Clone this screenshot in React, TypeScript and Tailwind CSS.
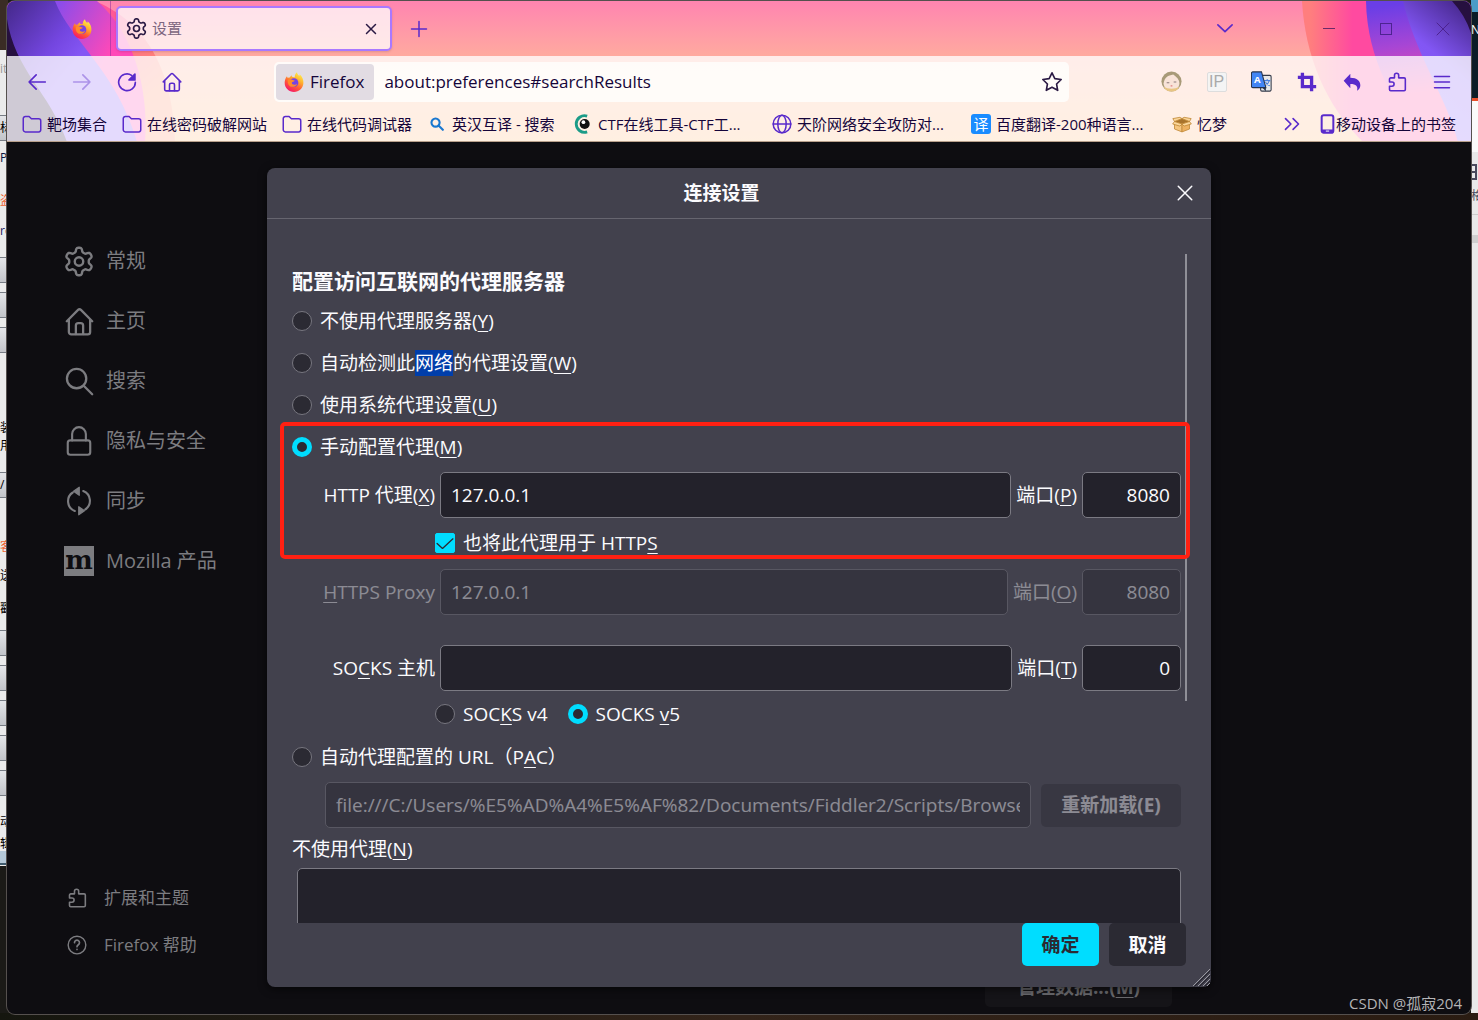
import { useState } from "react";
import type { ReactNode } from "react";
import { ChevronsRight } from "lucide-react";

const FONT = "font-['Open_Sans','Noto_Sans_CJK_SC',sans-serif]";

// Six-lobed outline of the settings gear, on a 24x24 box.
function gearPath() {
  const pts: string[] = [];
  for (let i = 0; i < 120; i++) {
    const t = (i / 120) * Math.PI * 2;
    const wave = Math.tanh(2 * Math.cos(6 * t)) / Math.tanh(2);
    const r = 9.4 + 1.6 * wave;
    pts.push(`${(12 + r * Math.sin(t)).toFixed(2)} ${(12 - r * Math.cos(t)).toFixed(2)}`);
  }
  return `M${pts.join("L")}Z`;
}
const GEAR = gearPath();

type IconProps = { className?: string };

function Line({ className, children, width = 1.5 }: IconProps & { children: ReactNode; width?: number }) {
  return (
    <svg
      viewBox="0 0 24 24"
      className={className}
      fill="none"
      stroke="currentColor"
      strokeWidth={width}
      strokeLinecap="round"
      strokeLinejoin="round"
      aria-hidden="true"
    >
      {children}
    </svg>
  );
}

const GearIcon = ({ className }: IconProps) => (
  <Line className={className} width={1.9}>
    <path d={GEAR} />
    <circle cx="12" cy="12" r="3.4" />
  </Line>
);

const HomeIcon = ({ className }: IconProps) => (
  <Line className={className} width={1.9}>
    <path d="M1.5 11.8 10.8 2.4a1.7 1.7 0 0 1 2.4 0l9.3 9.4M3.2 10.4v10.2a2 2 0 0 0 2 2h13.6a2 2 0 0 0 2-2V10.4" />
    <path d="M9 22.4v-7a2 2 0 0 1 2-2h2a2 2 0 0 1 2 2v7" />
  </Line>
);

const SearchIcon = ({ className }: IconProps) => (
  <Line className={className} width={1.9}>
    <circle cx="9.6" cy="9.6" r="8" />
    <path d="m15.5 15.5 7 7" />
  </Line>
);

const LockIcon = ({ className }: IconProps) => (
  <Line className={className} width={1.7}>
    <rect x="3" y="11.5" width="18" height="11.5" rx="2" />
    <path d="M6.5 11.5V6.4a5.5 5.5 0 0 1 11 0v5.1" />
  </Line>
);

const SyncIcon = ({ className }: IconProps) => (
  <Line className={className} width={1.7}>
    <path d="M7 5.2A8.4 8.4 0 0 0 8.6 20M17 18.8A8.4 8.4 0 0 0 15.4 4" />
    <path d="M12.2 1v6.4L7.6 4.2ZM11.8 16.6V23l4.6-3.2Z" fill="currentColor" strokeWidth="1" />
  </Line>
);

const PuzzleIcon = ({ className }: IconProps) => (
  <Line className={className} width={1.9}>
    <path d="M3 12V8.5A1.5 1.5 0 0 1 4.5 7H9V4a2.5 2.5 0 0 1 5 0V7h6.500A1.5 1.5 0 0 1 22 8.5v12.5a1.5 1.5 0 0 1-1.5 1.5h-16A1.5 1.5 0 0 1 3 21V17h3a2.5 2.5 0 0 0 0-5Z" />
  </Line>
);

const HelpIcon = ({ className }: IconProps) => (
  <Line className={className} width={1.7}>
    <circle cx="12" cy="12" r="10.6" />
    <path d="M9 9.2a3 3 0 1 1 4.6 2.5c-1 .7-1.6 1.2-1.6 2.5M12 17.3v.2" strokeWidth="2" />
  </Line>
);

const CloseIcon = ({ className }: IconProps) => (
  <Line className={className}>
    <path d="m3 3 18 18M21 3 3 21" />
  </Line>
);

const FolderIcon = ({ className }: IconProps) => (
  <Line className={className} width={1.8}>
    <path d="M1.5 19V5.500a2.5 2.5 0 0 1 2.5-2.5h4.5l2.800 2.8H20a2.5 2.5 0 0 1 2.5 2.5V19a2.5 2.5 0 0 1-2.5 2.5H4A2.5 2.5 0 0 1 1.5 19Z" />
  </Line>
);

const GlobeIcon = ({ className }: IconProps) => (
  <Line className={className} width={1.8}>
    <circle cx="12" cy="12" r="10.6" />
    <ellipse cx="12" cy="12" rx="5" ry="10.6" />
    <path d="M1.4 12h21.2" />
  </Line>
);

function FirefoxIcon({ className }: IconProps) {
  return (
    <svg viewBox="0 0 24 24" className={className} aria-hidden="true">
      <defs>
        <linearGradient id="ff-body" x1="0.85" y1="0.05" x2="0.3" y2="1">
          <stop offset="0" stopColor="#fff44f" />
          <stop offset="0.35" stopColor="#ffb02e" />
          <stop offset="0.65" stopColor="#ff5a36" />
          <stop offset="1" stopColor="#f5156c" />
        </linearGradient>
      </defs>
      <path
        d="M3.6 5.2C3.8 6 4 6.6 4.4 7l2.4-.5L9 3.8c.1 1 .5 1.8 1.3 2.3l2.6.2c-.1-2.6.8-4.8 2.7-6.1.2 2 1.3 3.2 2.8 4.4.5-.6.5-1.2.3-2 3 2.5 5 6.5 4.6 11C22.8 19.500 18 24 12 24S.8 19.500.8 13c0-3 1-5.800 2.8-7.800Z"
        fill="url(#ff-body)"
      />
      <circle cx="12" cy="12.8" r="5.2" fill="#7542e5" />
      <path d="M4.5 9.6c3-2 5.200.2 8.500.6-.4 1.500-3.200 1.300-3.600 2.600-.2 2.700 4.400 3.300 6.400.9-.4 4-7.400 6-10.300 1.500-.8-1.600-1.200-3.800-1-5.600Z" fill="#ff8a2a" />
    </svg>
  );
}

// Swirl that the theme paints behind the tab strip, left corner.
function ThemeLeft() {
  return (
    <svg viewBox="0 0 180 141" className="absolute top-0 left-0 h-[141px] w-[180px]" aria-hidden="true">
      <defs>
        <linearGradient id="tl-a" x1="0" y1="0" x2="0.5" y2="0.45">
          <stop offset="0" stopColor="#44288a" />
          <stop offset="0.7" stopColor="#7446e0" />
          <stop offset="1" stopColor="#8456f4" />
        </linearGradient>
        <linearGradient id="tl-b" x1="0.3" y1="0" x2="0.95" y2="0.4">
          <stop offset="0.1" stopColor="#8c4cea" />
          <stop offset="0.75" stopColor="#ff49b8" />
        </linearGradient>
        <linearGradient id="tl-c" x1="0.5" y1="0" x2="1" y2="0.5">
          <stop offset="0" stopColor="#ff4aa2" />
          <stop offset="1" stopColor="#ff9070" />
        </linearGradient>
      </defs>
      <path d="M88 0C130 18 165 55 168 141H0V0Z" fill="url(#tl-c)" />
      <path d="M0 0H90C125 30 142 85 138 141H0Z" fill="url(#tl-b)" />
      <path d="M0 0H48C62 38 110 70 130 141H0Z" fill="url(#tl-a)" />
      <path d="M0 18C8 70 42 90 60 141H0Z" fill="#26103f" />
    </svg>
  );
}

function ThemeRight() {
  return (
    <svg viewBox="0 0 220 141" className="absolute top-0 right-0 h-[141px] w-[220px]" aria-hidden="true">
      <defs>
        <linearGradient id="tr-a" x1="0" y1="0" x2="1" y2="0">
          <stop offset="0.05" stopColor="#ff7e7e" />
          <stop offset="0.3" stopColor="#ff4aa0" />
        </linearGradient>
        <linearGradient id="tr-b" x1="0" y1="0" x2="0.1" y2="1">
          <stop offset="0.05" stopColor="#6a3ee6" />
          <stop offset="0.35" stopColor="#a846d4" />
          <stop offset="0.7" stopColor="#ff4aa0" />
        </linearGradient>
        <linearGradient id="tr-c" x1="0.7" y1="0" x2="0.3" y2="1">
          <stop offset="0" stopColor="#4c2c96" />
          <stop offset="0.4" stopColor="#8256f4" />
          <stop offset="1" stopColor="#8a60ff" />
        </linearGradient>
      </defs>
      <path d="M51 0C54 55 75 105 112 141H220V0Z" fill="url(#tr-a)" />
      <path d="M115 0C116 60 145 105 172 141H220V0Z" fill="url(#tr-b)" />
      <path d="M152 0C165 55 195 95 207 141H220V0Z" fill="url(#tr-c)" />
      <path d="M201 0Q214 14 220 32V0Z" fill="#26103f" />
    </svg>
  );
}

// Slivers of the windows that lie behind the browser.
const leftScraps = [
  { text: "it", cls: "top-[60px] text-[#999]" },
  { text: "标", cls: "top-[119px] text-black" },
  { text: "P", cls: "top-[149px] text-[#0a1440]" },
  { text: "盗", cls: "top-[192px] text-[#ee6230]" },
  { text: "ro", cls: "top-[222px] text-[#1a1a60]" },
  { text: "装", cls: "top-[419px] text-black" },
  { text: "用", cls: "top-[437px] text-black" },
  { text: "/", cls: "top-[476px] text-black" },
  { text: "客", cls: "top-[538px] text-[#ee6230]" },
  { text: "送", cls: "top-[567px] text-black" },
  { text: "戳", cls: "top-[600px] text-black" },
  { text: "动", cls: "top-[813px] text-black" },
  { text: "辑", cls: "top-[835px] text-black" },
];
const leftBars = [
  "top-[115px]", "top-[257px]", "top-[292px]", "top-[327px]", "top-[472px]",
  "top-[630px]", "top-[665px]", "top-[700px]", "top-[735px]", "top-[770px]",
];

function Desktop() {
  return (
    <div className="absolute inset-0 overflow-hidden bg-[#1b1a17]" aria-hidden="true">
      <div className="absolute top-0 left-0 h-[50px] w-2 bg-[#3a2c25]" />
      <div className="absolute top-[50px] left-0 h-[816px] w-[7px] overflow-hidden bg-[#ebebeb]" />
      <div className="absolute inset-y-0 left-0 w-[7px] overflow-hidden">
        {leftBars.map((top) => (
          <div
            key={top}
            className={`absolute left-0 h-[26px] w-full border-y border-[#777c84] bg-linear-to-b from-[#e4e5e8] to-[#c3c5ca] ${top}`}
          />
        ))}
        {leftScraps.map((s) => (
          <span key={s.text} className={`absolute left-0 text-xs leading-[18px] whitespace-nowrap ${s.cls}`}>
            {s.text}
          </span>
        ))}
        <div className="absolute top-[851px] left-0 h-[14px] w-full border-b-2 border-[#3f5a6c] bg-[#b4c8d8]" />
      </div>
      <div className="absolute inset-y-0 right-0 flex w-[7px] flex-col overflow-hidden bg-[#e9e9e9] text-xs">
        <div className="h-3 shrink-0 bg-[#4a9cc8]" />
        <div className="h-[89px] shrink-0 border-b-[3px] border-[#e8502c] bg-[#0c1c27] pt-2.5 text-white">N</div>
        <div className="h-[51px] shrink-0 bg-[#fafafa]" />
        <div className="h-[63px] shrink-0 border-b border-[#ccc] pt-3 text-[#4a4a5c]">
          <div className="flex h-4 w-1.5 items-center border-2 border-l-0 border-[#4a4a5c]">
            <div className="h-0.5 w-full bg-[#4a4a5c]" />
          </div>
          <div className="pt-2">格</div>
        </div>
        <div className="mt-5 h-2 shrink-0 bg-[#cfcfcf]" />
      </div>
      <div className="absolute inset-x-0 bottom-0 h-[7px] bg-linear-to-r from-[#15160f] via-[#33241a] to-[#2a1c12]" />
    </div>
  );
}

function TabStrip() {
  return (
    <div className="relative flex h-[55px] items-center">
      <button aria-label="Firefox View" className="flex h-full w-26 items-center justify-end border-r border-[#8a2a9a]/50 pr-[18px]">
        <FirefoxIcon className="size-5" />
      </button>
      <div className="ml-[5px] flex h-[45px] w-[276px] items-center rounded-[5px] border-2 border-[#a978ff] bg-white/75 pr-3 pl-2 shadow-sm">
        <GearIcon className="size-[21px] text-[#2b1a44]" />
        <span className="ml-[5px] flex-1 text-[15px] text-[#7d6680]">设置</span>
        <button aria-label="关闭标签页" className="p-px">
          <CloseIcon className="size-3 text-[#2b1a44] [&>path]:stroke-[3px]" />
        </button>
      </div>
      <button aria-label="新建标签页" className="ml-[18px] text-[#592acb]">
        <Line className="size-[18px]" width={2}>
          <path d="M12 2v20M2 12h20" />
        </Line>
      </button>
      <button aria-label="列出所有标签页" className="mr-[66px] ml-auto text-[#592acb]">
        <Line className="size-[18px]" width={2.2}>
          <path d="m2.5 6.5 9.5 9 9.5-9" />
        </Line>
      </button>
      <div className="flex h-full text-[#6a2a68]">
        <button aria-label="最小化" className="flex w-[57px] items-center justify-center">
          <span className="h-px w-3 bg-current" />
        </button>
        <button aria-label="最大化" className="flex w-[57px] items-center justify-center text-[#4d2390]">
          <span className="size-3 border border-current" />
        </button>
        <button aria-label="关闭" className="flex w-[57px] items-center justify-center text-[#4d2390]">
          <CloseIcon className="size-4" />
        </button>
      </div>
    </div>
  );
}

function NavButton({ label, children }: { label: string; children: ReactNode }) {
  return (
    <button aria-label={label} className="flex h-10 w-[45px] items-center justify-center">
      {children}
    </button>
  );
}

function NavBar() {
  return (
    <div className="flex h-[51px] items-center px-[7px] text-[#592acb]">
      <NavButton label="后退">
        <Line className="size-5" width={2}><path d="M22 12H2.500M11 3.500 2.500 12l8.500 8.500" /></Line>
      </NavButton>
      <NavButton label="前进">
        <Line className="size-5 opacity-40" width={2}><path d="M2 12h19.500M13 3.500l8.500 8.500-8.500 8.500" /></Line>
      </NavButton>
      <NavButton label="重新载入">
        <Line className="size-5" width={2}>
          <path d="M22 12.500A10 10 0 1 1 17.500 4" />
          <path d="M21.500 2.500v7h-7Z" fill="currentColor" />
        </Line>
      </NavButton>
      <NavButton label="主页">
        <HomeIcon className="size-5" />
      </NavButton>
      <div className="mx-20 flex h-10 flex-1 items-center rounded-[5px] bg-[#fffcfa]/95 p-0.5 text-[#15053a]">
        <div className="flex h-9 items-center gap-1.5 rounded bg-[#e2dce3] pr-2.5 pl-2 text-[17px]">
          <FirefoxIcon className="size-5" />
          Firefox
        </div>
        <input
          aria-label="地址"
          defaultValue="about:preferences#searchResults"
          className="ml-2.5 min-w-0 flex-1 bg-transparent text-[17px] outline-none"
        />
        <button aria-label="为此页添加书签" className="mr-1 text-[#2b1a44]">
          <Line className="size-[22px]" width={1.8}>
            <path d="m12 2 3.100 6.300 6.900 1-5 4.900 1.200 6.900-6.200-3.300-6.200 3.300L7 14.200 2 9.300l6.900-1Z" />
          </Line>
        </button>
      </div>
      <NavButton label="头像">
        <svg viewBox="0 0 24 24" className="size-[21px]" aria-hidden="true">
          <circle cx="12" cy="12" r="11.5" fill="#a89a78" />
          <path d="M3 14C4 7 8 5 14 4c4 3 7 6 7 10 0 5-4 8-9 8s-9-3-9-8Z" fill="#f8e3d8" />
          <path d="M3 18c5 3 13 3 18 0-2 4-5 5.500-9 5.500S5 22 3 18Z" fill="#e8c583" />
          <path d="M6.500 13.500h3M14.500 12.500h3" stroke="#8a7a7a" strokeWidth="1.2" />
          <path d="M11 17h2" stroke="#e08080" strokeWidth="1.2" />
        </svg>
      </NavButton>
      <NavButton label="IP">
        <span className="flex size-5 items-center justify-center rounded-xs border border-[#ddd] bg-[#f4f4f4] font-['Liberation_Sans',sans-serif] text-base text-[#aaa]">
          IP
        </span>
      </NavButton>
      <NavButton label="翻译">
        <svg viewBox="0 0 24 24" className="size-[21px]" aria-hidden="true">
          <rect x="11" y="5" width="12" height="18" rx="1.5" fill="#e8e8e8" stroke="#333a4a" strokeWidth="1.2" />
          <path d="M15 11h7M18.500 9v2M21 11c-1 3-3 5-5 6M16.500 12.500c1 2 3 3.500 5 4.500" stroke="#4a80e0" strokeWidth="1.2" fill="none" />
          <path d="M2 1h10l5 18H2a1.500 1.500 0 0 1-1.500-1.500v-15A1.500 1.500 0 0 1 2 1Z" fill="#4285f4" stroke="#26334d" strokeWidth="1.2" />
          <path d="m13 19 4 4v-4Z" fill="#26334d" />
          <text x="3.5" y="13.5" fontSize="11" fontWeight="700" fill="#fff">A</text>
        </svg>
      </NavButton>
      <NavButton label="截图">
        <svg viewBox="0 0 24 24" className="size-5" fill="none" stroke="currentColor" strokeWidth="4" aria-hidden="true">
          <path d="M6.500 1v16.500H23M1 6.500h16.500V23" />
        </svg>
      </NavButton>
      <NavButton label="撤销">
        <svg viewBox="0 0 24 24" className="size-5" fill="currentColor" aria-hidden="true">
          <path d="M10 2v5c8 0 12 4 12 9 0 3-1.500 5-4 6.500 1.500-5-1-8-8-8v5L2 10.500Z" />
        </svg>
      </NavButton>
      <NavButton label="扩展">
        <PuzzleIcon className="size-5" />
      </NavButton>
      <NavButton label="打开应用程序菜单">
        <Line className="size-[18px]" width={2}><path d="M2 4.500h20M2 12h20M2 19.500h20" /></Line>
      </NavButton>
    </div>
  );
}

const bookmarks: { label: string; width: string; icon: ReactNode }[] = [
  { label: "靶场集合", width: "w-[85px]", icon: <FolderIcon className="size-5 text-[#592acb]" /> },
  { label: "在线密码破解网站", width: "w-[145px]", icon: <FolderIcon className="size-5 text-[#592acb]" /> },
  { label: "在线代码调试器", width: "w-[130px]", icon: <FolderIcon className="size-5 text-[#592acb]" /> },
  {
    label: "英汉互译 - 搜索",
    width: "w-[131px]",
    icon: (
      <Line className="mx-[3px] size-3.5 text-[#1a78d0]" width={3.6}>
        <circle cx="9.5" cy="9.5" r="7" />
        <path d="m15 15 7 7" />
      </Line>
    ),
  },
  {
    label: "CTF在线工具-CTF工...",
    width: "w-[184px]",
    icon: (
      <svg viewBox="0 0 24 24" className="size-5" aria-hidden="true">
        <path d="M17 2.500A10 10 0 1 0 17 21.500" fill="none" stroke="#1c9c88" strokeWidth="3.4" />
        <circle cx="14" cy="12" r="6" fill="#111" />
        <circle cx="12.5" cy="9.8" r="2.2" fill="#fff" />
      </svg>
    ),
  },
  { label: "天阶网络安全攻防对...", width: "w-[184px]", icon: <GlobeIcon className="size-5 text-[#592acb]" /> },
  {
    label: "百度翻译-200种语言...",
    width: "w-[186px]",
    icon: (
      <span className="flex size-5 items-center justify-center rounded-[3px] bg-[#1a8cff] text-[15px] leading-none text-white">
        译
      </span>
    ),
  },
  {
    label: "忆梦",
    width: "w-[60px]",
    icon: (
      <svg viewBox="0 0 24 24" className="size-5" stroke="#c08a3a" strokeWidth="1" strokeLinejoin="round" aria-hidden="true">
        <path d="M3 9v9l9 3.500V11Z" fill="#f6c680" />
        <path d="M21 9v9l-9 3.500V11Z" fill="#eeb262" />
        <path d="m3 9 9-3.500L21 9l-9 3Z" fill="#a8732c" />
        <path d="M3 9 .8 12l8.700 2.500L12 12ZM21 9l2.200 3-8.700 2.500L12 12ZM3 9 1 5.500 9.500 4 12 5.500ZM21 9l2-3.500L14.500 4 12 5.500Z" fill="#fbd79c" />
      </svg>
    ),
  },
];

function BookmarksBar() {
  return (
    <div className="flex h-[34px] items-center pl-[15px] text-[15px] whitespace-nowrap text-[#15053a]">
      <div className="flex min-w-0 flex-1 gap-[15px] overflow-hidden">
        {bookmarks.map((b) => (
          <a key={b.label} href="#" className={`flex shrink-0 items-center gap-[5px] ${b.width}`}>
            <span className="shrink-0">{b.icon}</span>
            {b.label}
          </a>
        ))}
      </div>
      <button aria-label="显示更多书签" className="mr-3.5 text-[#592acb]">
        <ChevronsRight className="size-[26px]" strokeWidth={1.5} />
      </button>
      <a href="#" className="mr-[15px] flex items-center">
        <svg viewBox="0 0 18 24" className="h-5 w-[17px] text-[#592acb]" fill="none" stroke="currentColor" aria-hidden="true">
          <rect x="2" y="1.5" width="14" height="21" rx="2.5" strokeWidth="2.4" />
          <path d="M2 20.500h14" strokeWidth="4" />
          <path d="M7 20.500h4" stroke="#fff" strokeWidth="1.2" />
        </svg>
        移动设备上的书签
      </a>
    </div>
  );
}

const categories: { label: string; icon: ReactNode }[] = [
  { label: "常规", icon: <GearIcon className="size-[31px]" /> },
  { label: "主页", icon: <HomeIcon className="size-[29px]" /> },
  { label: "搜索", icon: <SearchIcon className="size-[29px]" /> },
  { label: "隐私与安全", icon: <LockIcon className="size-[30px]" /> },
  { label: "同步", icon: <SyncIcon className="size-[30px]" /> },
  {
    label: "Mozilla 产品",
    icon: (
      <span className="flex size-[30px] items-center justify-center overflow-hidden bg-[#7c7c80] pb-0.5 font-['DejaVu_Serif',serif] text-[26px] leading-none font-bold text-[#0e0d11]">
        m
      </span>
    ),
  },
];

function Sidebar() {
  return (
    <nav className="flex w-[260px] shrink-0 flex-col pt-[89px] pb-[46px] pl-[57px] text-[#7c7c80]">
      {categories.map((c) => (
        <a key={c.label} href="#" className="flex h-15 items-center gap-3 text-xl">
          <span className="flex w-[30px] justify-center">{c.icon}</span>
          {c.label}
        </a>
      ))}
      <div className="mt-auto text-[17px]">
        <a href="#" className="flex h-[47px] items-center gap-[17px] pl-[3px]">
          <PuzzleIcon className="size-5" />
          扩展和主题
        </a>
        <a href="#" className="flex h-[47px] items-center gap-[17px] pl-[3px]">
          <HelpIcon className="size-5" />
          Firefox 帮助
        </a>
      </div>
    </nav>
  );
}

const Key = ({ children }: { children: ReactNode }) => (
  <span className="underline decoration-1 underline-offset-[3px]">{children}</span>
);

const radioClass =
  "size-5 shrink-0 appearance-none rounded-full border border-[#77767f] bg-[#2b2a33] checked:border-[5px] checked:border-[#00ddff]";

function Radio(props: { name: string; value: string; current: string; onPick: (v: string) => void; children: ReactNode }) {
  const { name, value, current, onPick, children } = props;
  return (
    <label className="flex h-6 items-center gap-2">
      <input type="radio" name={name} checked={current === value} onChange={() => onPick(value)} className={radioClass} />
      <span>{children}</span>
    </label>
  );
}

const fieldClass =
  "h-[46px] min-w-0 rounded-[5px] border border-[#7b7a83] bg-[#23222b] px-2.5 text-[#fbfbfe] outline-none";

function ProxyRow(props: {
  id: string;
  label: ReactNode;
  host: string;
  portLabel: ReactNode;
  port: string;
  disabled?: boolean;
}) {
  const { id, label, host, portLabel, port, disabled } = props;
  return (
    <div className={`flex items-center gap-[5px] ${disabled ? "opacity-40" : ""}`}>
      <label htmlFor={id} className="w-[143px] text-right whitespace-nowrap">{label}</label>
      <input id={id} defaultValue={host} disabled={disabled} className={`flex-1 ${fieldClass}`} />
      <label htmlFor={`${id}-port`} className="whitespace-nowrap">{portLabel}</label>
      <input id={`${id}-port`} defaultValue={port} disabled={disabled} className={`w-[99px] text-right ${fieldClass}`} />
    </div>
  );
}

function ConnectionDialog() {
  const [mode, setMode] = useState("manual");
  const [socks, setSocks] = useState("v5");
  const [share, setShare] = useState(true);

  return (
    <div
      role="dialog"
      aria-labelledby="dialog-title"
      className="relative z-10 flex flex-col rounded-lg bg-[#42414d] text-[19px] leading-6 text-[#fbfbfe] shadow-[0_2px_8px_rgba(0,0,0,0.6)]"
    >
      <header className="relative flex h-[51px] items-center justify-center border-b border-[#66656f] pr-[35px]">
        <h1 id="dialog-title" className="font-bold">连接设置</h1>
        <button aria-label="关闭" className="absolute right-4 p-px">
          <CloseIcon className="size-[18px] [&>path]:stroke-2" />
        </button>
      </header>

      <div className="relative pt-[46px] pr-[30px] pl-[25px]">
        <div className="absolute top-[35px] right-6 h-[447px] w-0.5 bg-[#8f8f97]" />
        <h2 className="mb-3 text-[21px] leading-8 font-bold">配置访问互联网的代理服务器</h2>
        <div className="flex flex-col gap-[18px]">
          <Radio name="mode" value="none" current={mode} onPick={setMode}>不使用代理服务器(<Key>Y</Key>)</Radio>
          <Radio name="mode" value="detect" current={mode} onPick={setMode}>
            自动检测此<mark className="bg-[#003eaa] text-inherit">网络</mark>的代理设置(<Key>W</Key>)
          </Radio>
          <Radio name="mode" value="system" current={mode} onPick={setMode}>使用系统代理设置(<Key>U</Key>)</Radio>
        </div>

        <div className="relative mt-[18px]">
          <Radio name="mode" value="manual" current={mode} onPick={setMode}>手动配置代理(<Key>M</Key>)</Radio>
          <div className="mt-[13px]">
            <ProxyRow id="http" label={<>HTTP 代理(<Key>X</Key>)</>} host="127.0.0.1" portLabel={<>端口(<Key>P</Key>)</>} port="8080" />
          </div>
          <label className="mt-[13px] ml-[143px] flex h-6 items-center gap-2">
            <span className="relative flex size-5">
              <input
                type="checkbox"
                checked={share}
                onChange={(e) => setShare(e.target.checked)}
                className="size-5 appearance-none rounded-xs border border-[#77767f] bg-[#2b2a33] checked:border-[#00ddff] checked:bg-[#00ddff]"
              />
              {share && (
                <Line className="pointer-events-none absolute inset-0 size-5 text-[#2b2a33]" width={1.6}>
                  <path d="m2.500 12.500 6.500 6L21.500 7" />
                </Line>
              )}
            </span>
            <span>也将此代理用于 HTTP<Key>S</Key></span>
          </label>
          <div className="pointer-events-none absolute -top-[13px] -right-[9px] -bottom-1 -left-3 rounded-[5px] border-4 border-[#ff2012]" />
        </div>

        <div className="mt-3.5">
          <ProxyRow id="https" label={<><Key>H</Key>TTPS Proxy</>} host="127.0.0.1" portLabel={<>端口(<Key>O</Key>)</>} port="8080" disabled />
        </div>
        <div className="mt-[30px]">
          <ProxyRow id="socks" label={<>SO<Key>C</Key>KS 主机</>} host="" portLabel={<>端口(<Key>T</Key>)</>} port="0" />
        </div>
        <div className="mt-[11px] ml-[143px] flex gap-5">
          <Radio name="socks" value="v4" current={socks} onPick={setSocks}>SOC<Key>K</Key>S v4</Radio>
          <Radio name="socks" value="v5" current={socks} onPick={setSocks}>SOCKS <Key>v</Key>5</Radio>
        </div>

        <div className="mt-[19px]">
          <Radio name="mode" value="pac" current={mode} onPick={setMode}>自动代理配置的 URL（P<Key>A</Key>C）</Radio>
        </div>
        <div className="mt-[13px] ml-[33px] flex items-center gap-2.5 opacity-40">
          <input
            aria-label="自动代理配置的 URL"
            disabled
            defaultValue="file:///C:/Users/%E5%AD%A4%E5%AF%82/Documents/Fiddler2/Scripts/BrowserPAC.js"
            className={`flex-1 ${fieldClass}`}
          />
          <button disabled className="h-[43px] w-[140px] rounded-[5px] bg-[#2b2a33] font-bold">重新加载(E)</button>
        </div>

        <label htmlFor="no-proxy" className="mt-[9px] block">不使用代理(<Key>N</Key>)</label>
        <div className="mt-[7px] ml-[5px] flex h-[55px] overflow-hidden">
          <textarea id="no-proxy" className="h-20 flex-1 resize-none rounded-[5px] border border-[#7b7a83] bg-[#23222b] p-2 outline-none" />
        </div>
      </div>

      <footer className="flex justify-end gap-2.5 pr-[25px] pb-[21px] font-bold">
        <button className="h-[43px] w-[77px] rounded-[5px] bg-[#00ddff] text-[#2b2a33]">确定</button>
        <button className="h-[43px] w-[77px] rounded-[5px] bg-[#2b2a33]">取消</button>
      </footer>
      <svg viewBox="0 0 18 18" className="absolute right-0 bottom-0 size-[18px]" stroke="#9a9aa2" strokeWidth="1" aria-hidden="true">
        <path d="M0 17 17 0M5 17 17 5M10 17l7-7M14 17l3-3" />
        <path d="M1.500 17.500 17.500 1.500M6.500 17.500l11-11M11.500 17.500l6-6" stroke="#23222b" />
      </svg>
    </div>
  );
}

export default function App() {
  return (
    <div className={`relative flex min-h-screen flex-col px-[7px] pt-px pb-1.5 ${FONT}`}>
      <Desktop />
      <div className="relative flex flex-1 flex-col overflow-hidden rounded-lg bg-[#0e0d11] shadow-[0_0_0_1px_#55504e]">
        <div className="relative bg-linear-to-b from-[#ff84b0] via-[#ffaf9c] via-45% to-[#ffb978]">
          <ThemeLeft />
          <ThemeRight />
          <TabStrip />
          <div className="relative border-b border-[#b8a08c] bg-white/78">
            <NavBar />
            <BookmarksBar />
          </div>
        </div>

        <div className="flex flex-1">
          <Sidebar />
          <main className="flex min-w-0 flex-1 flex-col pt-[26px]">
            <ConnectionDialog />
            <button className="-mt-[23px] mr-[39px] h-[43px] w-[187px] self-end rounded-[5px] bg-[#151418] pt-1 text-[19px] font-bold text-[#69696d]">
              管理数据...(<Key>M</Key>)
            </button>
          </main>
          <div className="flex w-[260px] shrink-0 items-end justify-end pr-[9px] text-[15px] text-[#b4b4b6]">
            CSDN @孤寂204
          </div>
        </div>
      </div>
    </div>
  );
}
